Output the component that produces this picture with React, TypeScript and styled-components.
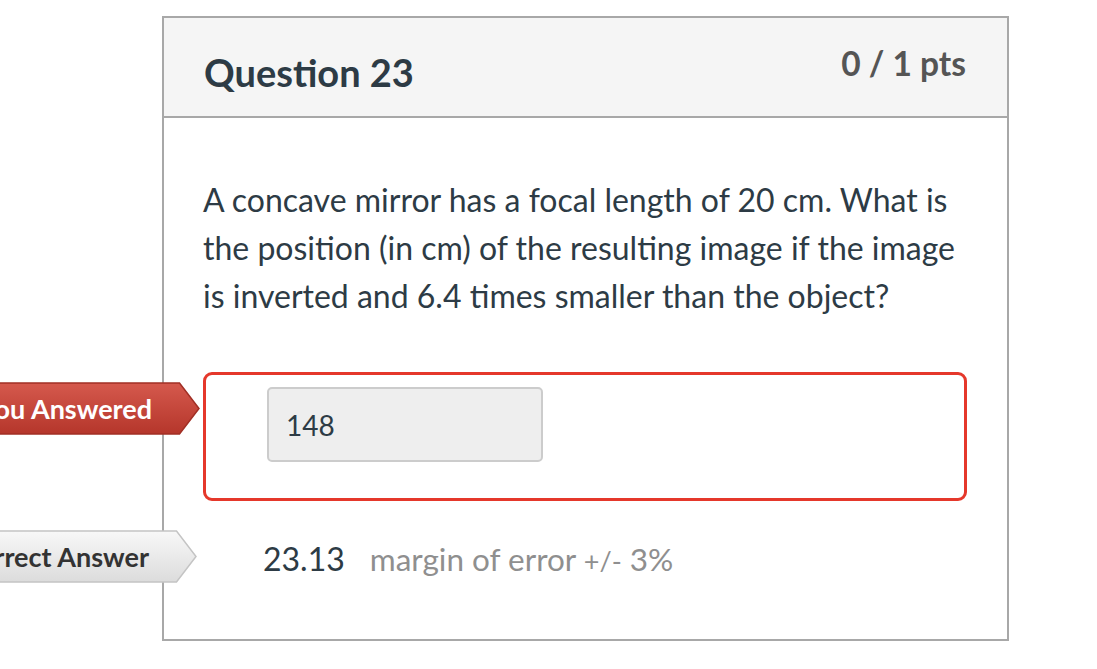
import React from 'react';
import styled, { createGlobalStyle } from 'styled-components';

const GlobalStyle = createGlobalStyle`
  html, body {
    margin: 0;
    padding: 0;
    background: #fff;
    overflow: hidden;
  }
  body {
    font-family: Lato, "Noto Sans", sans-serif;
    color: #2d3b45;
  }
`;

const Page = styled.div`
  width: 1097px;
  height: 669px;
  padding: 16px 0 0 162px;
  box-sizing: border-box;
`;

const Card = styled.div`
  width: 847px;
  height: 625px;
  box-sizing: border-box;
  border: 2px solid #a8a8a8;
  display: flex;
  flex-direction: column;
`;

const Header = styled.div`
  height: 100px;
  box-sizing: border-box;
  background: #f5f5f5;
  border-bottom: 2px solid #a8a8a8;
  padding: 26px 41px 0 40px;
  display: flex;
  justify-content: space-between;
  align-items: flex-start;
`;

const Title = styled.h3`
  margin: 6px 0 0 0;
  font-size: 38px;
  line-height: 1.2;
  font-weight: 700;
  color: #2d3b45;
`;

const Points = styled.div`
  margin-top: -1px;
  font-size: 33.5px;
  line-height: 1.2;
  font-weight: 700;
  color: #555;
`;

const Body = styled.div`
  padding: 58px 40px 0 39px;
`;

const QuestionText = styled.p`
  margin: 0;
  font-size: 32px;
  line-height: 48px;
  color: #2d3b45;
`;

const AnswerBox = styled.div`
  position: relative;
  margin-top: 52px;
  border: 3px solid #e5382b;
  border-radius: 9px;
  padding: 12px 0 36px 61px;
`;

const InputLike = styled.div`
  width: 276px;
  height: 75px;
  box-sizing: border-box;
  background: #eeeeee;
  border: 2px solid #cccccc;
  border-radius: 5px;
  padding: 0 0 0 17px;
  display: flex;
  align-items: center;
  font-size: 28px;
  color: #2d3b45;
`;

const CorrectRow = styled.div`
  position: relative;
  margin-top: 34px;
  padding-left: 60px;
  font-size: 32px;
  line-height: 48px;
  color: #2d3b45;
`;

const Tolerance = styled.span`
  margin-left: 25px;
  font-size: 31.5px;
  color: #8f8f8f;
`;

const Small = styled.span`
  font-size: 0.86em;
`;

const Tag = styled.div<{ $top: number; $tone: 'red' | 'gray' }>`
  position: absolute;
  top: ${p => p.$top}px;
  right: calc(100% + 6px);
  width: 260px;
  height: 53px;
  box-sizing: border-box;
  padding-right: 48px;
  display: flex;
  align-items: center;
  justify-content: flex-end;
  font-size: 27px;
  font-weight: 700;
  color: ${p => (p.$tone === 'red' ? '#ffffff' : '#333333')};
  white-space: nowrap;

  svg {
    position: absolute;
    inset: 0;
    z-index: 0;
  }
  span {
    position: relative;
    z-index: 1;
  }
`;

const TagShape: React.FC<{ tone: 'red' | 'gray' }> = ({ tone }) => {
  const id = `grad-${tone}`;
  const top = tone === 'red' ? '#d5594d' : '#f8f8f8';
  const bottom = tone === 'red' ? '#b5362b' : '#dcdcdc';
  const stroke = tone === 'red' ? '#a12f25' : '#c4c4c4';
  return (
    <svg width="260" height="53" viewBox="0 0 260 53">
      <defs>
        <linearGradient id={id} x1="0" y1="0" x2="0" y2="1">
          <stop offset="0" stopColor={top} />
          <stop offset="1" stopColor={bottom} />
        </linearGradient>
      </defs>
      <polygon
        points="-2,1 239.5,1 259,26.5 239.5,52 -2,52"
        fill={`url(#${id})`}
        stroke={stroke}
        strokeWidth="1.5"
      />
    </svg>
  );
};

const App: React.FC = () => {
  return (
    <Page>
      <GlobalStyle />
      <Card>
        <Header>
          <Title>Question 23</Title>
          <Points>0 / 1 pts</Points>
        </Header>
        <Body>
          <QuestionText>
            A concave mirror has a focal length of 20 cm. What is the position (in cm) of the
            resulting image if the image is inverted and 6.4 times smaller than the object?
          </QuestionText>
          <AnswerBox>
            <Tag $top={7} $tone="red">
              <TagShape tone="red" />
              <span>You Answered</span>
            </Tag>
            <InputLike>148</InputLike>
          </AnswerBox>
          <CorrectRow>
            <Tag $top={-5} $tone="gray">
              <TagShape tone="gray" />
              <span>Correct Answer</span>
            </Tag>
            23.13
            <Tolerance>
              margin of error <Small>+/-</Small> 3%
            </Tolerance>
          </CorrectRow>
        </Body>
      </Card>
    </Page>
  );
};

export default App;
